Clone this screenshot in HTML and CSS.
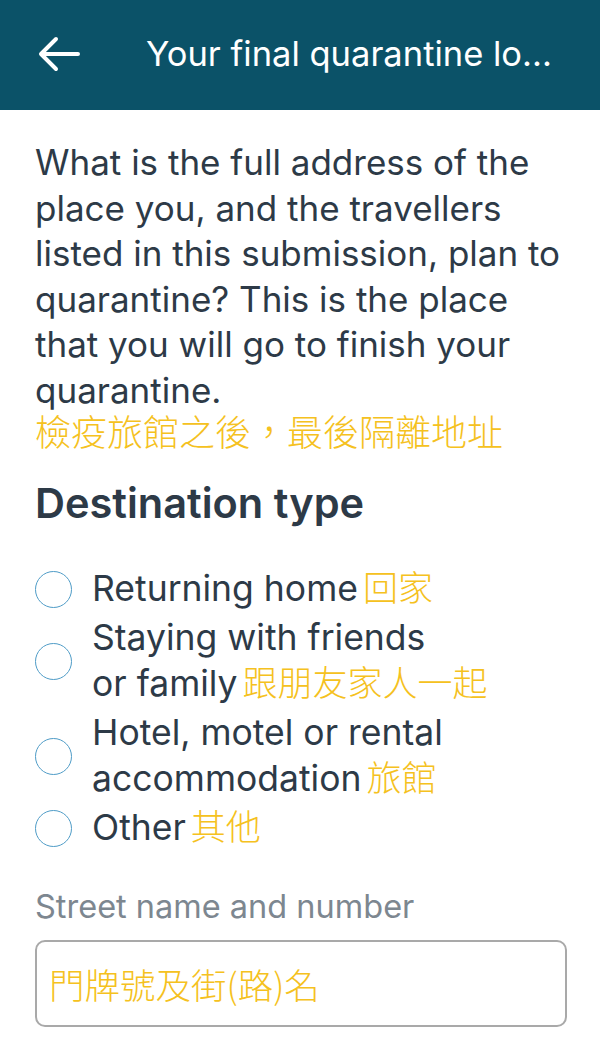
FILE: index.html
```html
<!DOCTYPE html>
<html>
<head>
<meta charset="utf-8">
<link rel="stylesheet" href="styles.css">
</head>
<body>
<header class="topbar">
  <svg class="back" width="44" height="36" viewBox="0 0 44 36"><path d="M40 18H4M18 3L3 18L18 33" fill="none" stroke="#fff" stroke-width="4" stroke-linecap="round" stroke-linejoin="round"/></svg>
  <div class="title">Your final quarantine lo...</div>
</header>
<main class="content">
  <p class="question">What is the full address of the place you, and the travellers listed in this submission, plan to quarantine? This is the place that you will go to finish your quarantine.</p>
  <p class="zh zh-line">檢疫旅館之後，最後隔離地址</p>
  <h2 class="heading">Destination type</h2>
  <div class="options">
    <div class="option"><span class="radio"></span><span class="label">Returning home<span class="zh tag">回家</span></span></div>
    <div class="option"><span class="radio"></span><span class="label">Staying with friends<br>or family<span class="zh tag">跟朋友家人一起</span></span></div>
    <div class="option"><span class="radio"></span><span class="label">Hotel, motel or rental<br>accommodation<span class="zh tag">旅館</span></span></div>
    <div class="option"><span class="radio"></span><span class="label">Other<span class="zh tag">其他</span></span></div>
  </div>
  <div class="field-label">Street name and number</div>
  <div class="input"><span class="zh">門牌號及街(路)名</span></div>
</main>
</body>
</html>
```
FILE: styles.css
```css
* { box-sizing: border-box; }
html, body { margin: 0; padding: 0; background: #fff; }
body { font-family: Inter, "Noto Sans CJK TC", sans-serif; color: #2d3a47; }
.topbar {
  height: 110px;
  background: #0b5268;
  display: flex;
  align-items: center;
  padding-left: 38px;
}
.back { flex: none; margin-top: -2px; }
.title {
  margin-left: 64px;
  color: #fff;
  font-size: 34.5px;
  font-weight: 400;
  margin-top: -4px;
  white-space: nowrap;
}
.content { padding: 30px 35px 0 35px; }
.question {
  margin: 0;
  font-size: 35px;
  line-height: 45.5px;
}
.zh { font-family: "Noto Sans CJK TC", sans-serif; color: #f5c120; font-weight: 300; }
.zh-line { margin: 0; font-size: 36px; line-height: 34px; }
.heading {
  margin: 31px 0 0 0;
  font-size: 41.5px;
  font-weight: 600;
  line-height: 50px;
}
.options { margin-top: 38px; display: flex; flex-direction: column; gap: 3px; }
.option { display: flex; align-items: center; }
.radio {
  flex: none;
  width: 37px; height: 37px;
  border: 1.5px solid #4f9cc7;
  border-radius: 50%;
}
.label {
  margin-left: 20px;
  font-size: 35.5px;
  line-height: 46px;
}
.tag { font-size: 35px; margin-left: 5px; line-height: 0; }
.field-label {
  margin-top: 36px;
  font-size: 32.5px;
  line-height: 40px;
  color: #7d8790;
}
.input {
  margin-top: 13px;
  width: 532px;
  height: 87px;
  border: 2px solid #a9a9a9;
  border-radius: 10px;
  display: flex;
  align-items: center;
  padding-left: 12px;
}
.input .zh { font-size: 35.5px; }
```
